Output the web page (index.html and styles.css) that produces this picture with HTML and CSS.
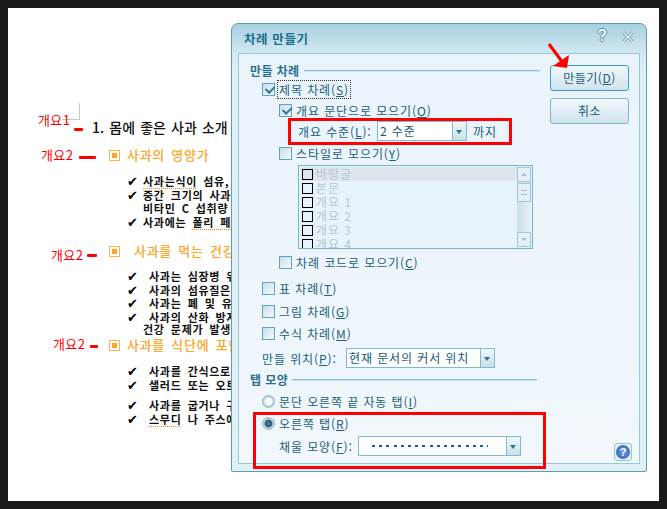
FILE: index.html
```html
<!DOCTYPE html>
<html lang="ko">
<head>
<meta charset="utf-8">
<title>차례 만들기</title>
<link rel="stylesheet" href="styles.css">
</head>
<body>
<div class="sheet">
  <div class="crop"></div>
  <div class="doc">
    <div class="h1">1. 몸에 좋은 사과 소개</div>
    <div class="h2 a1"><i class="sq"></i>사과의 영양가</div>
    <div class="li l1"><b>✔</b><s class="sp">사과는식이</s> 섬유,</div>
    <div class="li l2"><b>✔</b>중간 크기의 사과</div>
    <div class="li l3">비타민 C 섭취량</div>
    <div class="li l4"><b>✔</b>사과에는 <s class="sp">폴리 페놀</s></div>
    <div class="h2 a2"><i class="sq"></i>사과를 먹는 건강</div>
    <div class="li l5"><b>✔</b><span>사과는 심장병 위</span></div>
    <div class="li l6"><b>✔</b><span>사과의 섬유질은 혈</span></div>
    <div class="li l7"><b>✔</b><span>사과는 폐 및 유방</span></div>
    <div class="li l8"><b>✔</b><span>사과의 산화 방지</span></div>
    <div class="li l9">건강 문제가 발생</div>
    <div class="h2 a3"><i class="sq"></i>사과를 식단에 포함</div>
    <div class="li l10"><b>✔</b><span>사과를 간식으로</span></div>
    <div class="li l11"><b>✔</b><span>샐러드 또는 오트</span></div>
    <div class="li l12"><b>✔</b><span>사과를 굽거나 구</span></div>
    <div class="li l13"><b>✔</b><span><s class="sp">스무디</s> 나 주스에</span></div>
  </div>
  <div class="note n1">개요1</div><i class="dash d1"></i>
  <div class="note n2">개요2</div><i class="dash d2"></i>
  <div class="note n3">개요2</div><i class="dash d3"></i>
  <div class="note n4">개요2</div><i class="dash d4"></i>

  <div class="dialog">
    <div class="titlebar">
      <span class="title">차례 만들기</span>
      <span class="help">?</span>
      <svg class="close" viewBox="0 0 12 12" width="12" height="12"><path d="M1.5 1.5l9 9M10.5 1.5l-9 9" stroke="#6f9db2" stroke-width="3" fill="none"/><path d="M1.5 1.5l9 9M10.5 1.5l-9 9" stroke="#f2f8fb" stroke-width="1.2" fill="none"/></svg>
    </div>
    <div class="body">
      <div class="main">
        <div class="legend"><span>만들 차례</span><i></i></div>
        <div class="opt o-title"><i class="cb on"></i><span class="focus">제목 차례(<u>S</u>)</span></div>
        <div class="opt o-outline"><i class="cb on"></i><span>개요 문단으로 모으기(<u>O</u>)</span></div>
        <div class="opt o-level">
          <span class="lbl">개요 수준(<u>L</u>):</span>
          <span class="combo c-level"><em>2 수준</em><i class="arrow"></i></span>
          <span class="until">까지</span>
        </div>
        <div class="opt o-style"><i class="cb"></i><span>스타일로 모으기(<u>Y</u>)</span></div>
        <div class="listbox">
          <div class="items">
            <div class="item sel"><i></i>바탕글</div>
            <div class="item"><i></i>본문</div>
            <div class="item"><i></i>개요 1</div>
            <div class="item"><i></i>개요 2</div>
            <div class="item"><i></i>개요 3</div>
            <div class="item"><i></i>개요 4</div>
          </div>
          <div class="scroll">
            <div class="sb-btn"><i class="up"></i></div>
            <div class="sb-thumb"><i></i></div>
            <div class="sb-track"></div>
            <div class="sb-btn"><i class="down"></i></div>
          </div>
        </div>
        <div class="opt o-code"><i class="cb"></i><span>차례 코드로 모으기(<u>C</u>)</span></div>
        <div class="opt o-table"><i class="cb"></i><span>표 차례(<u>T</u>)</span></div>
        <div class="opt o-pic"><i class="cb"></i><span>그림 차례(<u>G</u>)</span></div>
        <div class="opt o-eq"><i class="cb"></i><span>수식 차례(<u>M</u>)</span></div>
        <div class="opt o-pos">
          <span class="lbl">만들 위치(<u>P</u>):</span>
          <span class="combo c-pos"><em>현재 문서의 커서 위치</em><i class="arrow"></i></span>
        </div>
        <div class="legend l-tab"><span>탭 모양</span><i></i></div>
        <div class="opt o-r1"><i class="rb"></i><span>문단 오른쪽 끝 자동 탭(<u>I</u>)</span></div>
        <div class="opt o-r2"><i class="rb on"></i><span>오른쪽 탭(<u>R</u>)</span></div>
        <div class="opt o-fill">
          <span class="lbl">채울 모양(<u>F</u>):</span>
          <span class="combo c-fill"><em></em><i class="arrow"></i></span>
        </div>
      </div>
      <div class="side">
        <div class="btn primary">만들기(<u>D</u>)</div>
        <div class="btn">취소</div>
        <div class="helpbtn"><span>?</span></div>
      </div>
    </div>
  </div>

  <div class="mark m1"></div>
  <div class="mark m2"></div>
  <svg class="red-arrow" viewBox="0 0 30 30" width="30" height="30"><path d="M4 4L18 23" stroke="#f00" stroke-width="3" fill="none"/><path d="M24 15L8 26L22 28Z" fill="#f00"/></svg>
</div>
</body>
</html>
```
FILE: styles.css
```css
* { box-sizing: border-box; }
html, body { margin: 0; padding: 0; height: 100%; }
body { background: #1a1a1a; font-family: "Noto Sans CJK KR", "Liberation Sans", sans-serif; overflow: hidden; }
i, em { font-style: normal; }
u { text-decoration: underline; }

.sheet { position: absolute; left: 8px; top: 8px; width: 651px; height: 493px; background: #fff; overflow: hidden; }

.crop { position: absolute; left: 54px; top: 95px; width: 18px; height: 17px; border-right: 1px solid #c8c8c8; border-bottom: 1px solid #c8c8c8; }
.doc { position: absolute; left: 0; top: 0; width: 224px; height: 493px; overflow: hidden; }
.doc > div { position: absolute; white-space: nowrap; }
.h1 { left: 84px; top: 109px; font-size: 14px; line-height: 20px; font-weight: 500; color: #111; word-spacing: 1.2px; }
.h2 { font-size: 13px; line-height: 18px; color: #fca62a; font-weight: 500; letter-spacing: 0.7px; word-spacing: 2px; display: flex; align-items: center; }
.sq { width: 11px; height: 11px; border: 1px solid #fdb24b; margin-right: 7px; flex: none; position: relative; background: #fff; }
.sq::after { content: ""; position: absolute; left: 2px; top: 2px; width: 5px; height: 5px; background: #fca62a; }
.a1 { left: 101px; top: 138px; }
.a2 { left: 101px; top: 234px; }
.a2 .sq { margin-right: 14px; }
.a3 { left: 101px; top: 328px; }
.li { font-size: 11px; line-height: 14px; font-weight: 700; color: #111; letter-spacing: 0.7px; word-spacing: 2.4px; }
.li b { display: inline-block; width: 16px; font-family: "DejaVu Sans", sans-serif; font-size: 13px; line-height: 14px; letter-spacing: 0; color: #000; }
.li span { margin-left: 6px; }
.sp { text-decoration: underline dotted #e8841a 1px; text-underline-offset: 2px; }
.l1 { left: 119px; top: 166px; }
.l2 { left: 119px; top: 180px; }
.l3 { left: 135px; top: 193px; }
.l4 { left: 119px; top: 207px; }
.l5 { left: 119px; top: 261px; }
.l6 { left: 119px; top: 275px; }
.l7 { left: 119px; top: 288px; }
.l8 { left: 119px; top: 302px; }
.l9 { left: 135px; top: 314px; }
.l10 { left: 119px; top: 356px; }
.l11 { left: 119px; top: 370px; }
.l12 { left: 119px; top: 390px; }
.l13 { left: 119px; top: 404px; }

.note { position: absolute; color: #f00; font-size: 13px; line-height: 16px; letter-spacing: 0.4px; white-space: nowrap; }
.dash { position: absolute; height: 3px; background: #f00; border-radius: 1px; }
.n1 { left: 30px; top: 104px; }
.d1 { left: 66px; top: 120px; width: 9px; }
.n2 { left: 33px; top: 139px; }
.d2 { left: 71px; top: 148px; width: 17px; }
.n3 { left: 43px; top: 239px; }
.d3 { left: 79px; top: 246px; width: 10px; }
.n4 { left: 45px; top: 328px; }
.d4 { left: 82px; top: 337px; width: 8px; }

.dialog { position: absolute; left: 223px; top: 15px; width: 416px; height: 449px; border: 1px solid #5f9db5; border-radius: 7px 7px 2px 2px; background: linear-gradient(#a6d0e1 0, #cfe6f0 26px, #e1f0f7 50px, #e1f0f7 100%); padding: 0 6px 7px; display: flex; flex-direction: column; }
.titlebar { height: 29px; flex: none; position: relative; display: flex; align-items: center; }
.title { font-size: 12.5px; font-weight: 700; color: #1c6f8c; padding: 0 0 0 6px; letter-spacing: 0.6px; }
.help { position: absolute; right: 33px; top: 3px; font-family: "Liberation Sans", sans-serif; font-weight: 700; font-size: 16px; line-height: 18px; color: #f2f8fb; text-shadow: 1px 0 0 #5f90a6, -1px 0 0 #5f90a6, 0 1px 0 #5f90a6, 0 -1px 0 #5f90a6; }
.close { position: absolute; right: 6px; top: 7px; }
.body { flex: 1; border: 1px solid #93cbdb; background: linear-gradient(#e9f3fa, #f1f7fb); display: flex; min-height: 0; }
.main { width: 301px; flex: none; padding-left: 11px; padding-top: 7px; font-size: 12px; color: #20607a; }
.legend { display: flex; align-items: center; height: 18px; font-weight: 700; color: #2a7090; letter-spacing: 0.4px; }
.legend span { margin-right: 4px; }
.legend i { flex: 1; height: 1px; background: #8cc2d3; box-shadow: 0 1px 0 #c9e3ec; }
.opt { display: flex; align-items: center; height: 18px; white-space: nowrap; letter-spacing: 0.9px; margin-left: 12px; }
.lbl { flex: none; }
.cb { width: 13px; height: 13px; border: 1px solid #5fa3c2; background: linear-gradient(135deg, #c9dce7, #f5f9fb); margin-right: 4px; flex: none; position: relative; }
.cb.on::after { content: ""; position: absolute; left: 2px; top: 1px; width: 7px; height: 4px; border-left: 2px solid #2d7aa5; border-bottom: 2px solid #2d7aa5; transform: rotate(-45deg) translate(0, 1px); }
.rb { width: 13px; height: 13px; border-radius: 50%; border: 1px solid #93b4c2; background: radial-gradient(circle, #f5f9fb 0, #f5f9fb 42%, #bcd0da 62%, #d5e3ea 100%); margin-right: 4px; flex: none; }
.rb.on { background: radial-gradient(circle, #4d86a8 0, #24597c 42%, #bcd0da 56%, #d5e3ea 100%); }
.focus { outline: 1px dotted #333; outline-offset: 0; padding: 0 1px; margin-left: -1px; }
.o-title { margin-top: 1px; }
.o-outline { margin-left: 29px; margin-top: 3px; }
.o-level { margin-left: 48px; margin-top: 2px; height: 20px; }
.o-level .lbl { width: 79px; }
.combo { display: flex; height: 20px; border: 1px solid #7fbcd2; background: #fff; color: #14587a; flex: none; }
.combo em { flex: 1; padding-left: 2px; line-height: 18px; }
.arrow { width: 14px; flex: none; border-left: 1px solid #7fbcd2; background: linear-gradient(#f1f7fa, #c9dfe8); position: relative; }
.arrow::after { content: ""; position: absolute; left: 3px; top: 8px; border: 3px solid transparent; border-top: 4px solid #2a7394; border-bottom: 0; }
.c-level { width: 90px; }
.until { margin-left: 6px; }
.o-style { margin-left: 29px; margin-top: 3px; }
.listbox { margin: 3px 0 0 48px; width: 235px; height: 84px; border: 1px solid #75b5cc; background: #e6f3fa; display: flex; overflow: hidden; }
.items { flex: 1; margin: 1px 0 0 2px; color: #b7c8d0; overflow: hidden; }
.item { height: 14px; flex: none; display: flex; align-items: center; letter-spacing: 0.9px; line-height: 14px; padding-left: 1px; }
.item i { width: 11px; height: 11px; border: 1px solid #000; margin-right: 3px; flex: none; background: transparent; }
.item.sel { background: #dde6ec; }
.scroll { width: 14px; flex: none; margin: 1px 1px 1px 0; display: flex; flex-direction: column; background: #cfe2ea; }
.sb-btn { height: 15px; flex: none; border: 1px solid #a3c7d5; background: #e5f0f6; position: relative; }
.sb-btn i { position: absolute; left: 3px; top: 5px; border: 3px solid transparent; }
.sb-btn .up { border-bottom: 3px solid #a8c2ce; border-top: 0; }
.sb-btn .down { border-top: 3px solid #a8c2ce; border-bottom: 0; }
.sb-thumb { height: 19px; flex: none; border: 1px solid #a3c7d5; background: #e5f0f6; position: relative; margin-top: 1px; }
.sb-thumb i { position: absolute; left: 3px; top: 6px; width: 6px; height: 5px; border-top: 1px solid #a8c2ce; border-bottom: 1px solid #a8c2ce; }
.sb-track { flex: 1; background: linear-gradient(90deg, #c9dfe8, #e5f0f6); }
.o-code { margin-left: 29px; margin-top: 4px; }
.o-table { margin-top: 8px; }
.o-pic { margin-top: 5px; }
.o-eq { margin-top: 4px; }
.o-pos { margin-top: 6px; height: 20px; }
.o-pos .lbl { width: 84px; }
.c-pos { width: 149px; }
.l-tab { margin-top: 2px; }
.l-tab i { margin-right: 3px; }
.o-r1 { margin-top: 4px; }
.o-r2 { margin-top: 4px; }
.o-fill { margin-left: 29px; margin-top: 4px; height: 20px; }
.o-fill .lbl { width: 79px; }
.c-fill { width: 163px; }
.c-fill em { margin: 8px 18px 0 13px; padding: 0; height: 2px; flex: 1; background: repeating-linear-gradient(90deg, #1f5f85 0, #1f5f85 3px, transparent 3px, transparent 7.2px); }
.side { flex: 1; padding: 11px 0 0 10px; position: relative; }
.btn { width: 79px; height: 26px; border: 1px solid #82b6c9; border-radius: 3px; background: linear-gradient(#f2f8fb, #cfe3ec); color: #20607a; font-size: 12px; letter-spacing: 0.5px; text-align: center; line-height: 24px; margin-bottom: 7px; }
.btn.primary { border-color: #3f9dc8; }
.helpbtn { position: absolute; right: 7px; bottom: 2px; width: 18px; height: 18px; border: 1px solid #9dc2d2; border-radius: 3px; background: #e6f1f6; display: flex; align-items: center; justify-content: center; }
.helpbtn span { width: 14px; height: 14px; border-radius: 50%; background: radial-gradient(#6a9bd9, #2a5fa8); color: #fff; font: 700 11px/14px "Liberation Sans", sans-serif; text-align: center; }

.mark { position: absolute; border: 3px solid #f00; }
.m1 { left: 280px; top: 110px; width: 224px; height: 27px; }
.m2 { left: 245px; top: 404px; width: 293px; height: 57px; }
.red-arrow { position: absolute; left: 537px; top: 32px; }
```
